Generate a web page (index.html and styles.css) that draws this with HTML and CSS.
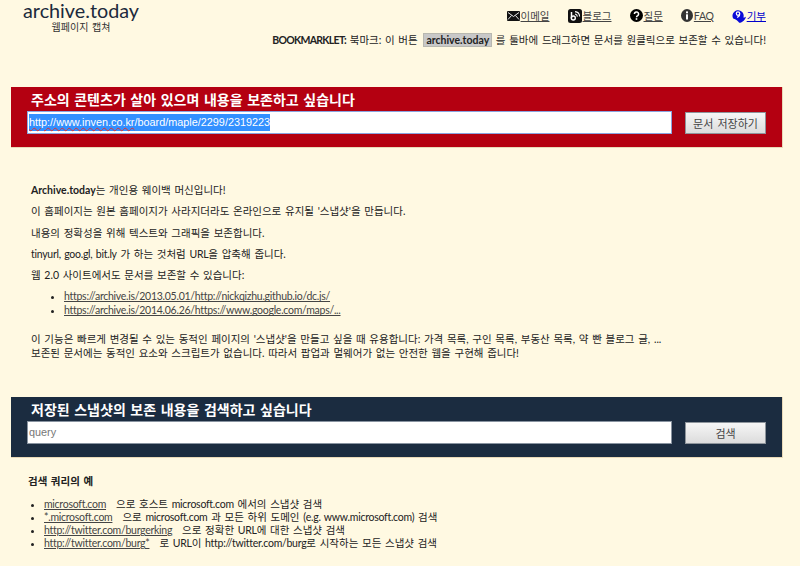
FILE: index.html
```html
<!DOCTYPE html>
<html lang="ko">
<head>
<meta charset="utf-8">
<title>archive.today</title>
<link rel="stylesheet" href="styles.css">
</head>
<body>
<header class="top">
  <div class="brand">
    <div class="logo">archive.today</div>
    <div class="tagline">웹페이지 캡쳐</div>
  </div>
  <div class="topright">
    <nav class="nav">
      <a class="navitem" href="#"><svg width="13" height="10" viewBox="0 0 13 10"><rect width="13" height="10" rx="1" fill="#111"/><path d="M1 1.5 6.5 5.5 12 1.5M1 8.5 4.5 4.5M12 8.5 8.5 4.5" fill="none" stroke="#fff" stroke-width=".9"/></svg><span>이메일</span></a>
      <a class="navitem" href="#"><svg width="14" height="14" viewBox="0 0 14 14"><rect width="14" height="14" rx="2.5" fill="#111"/><path d="M3.5 3v6.2" stroke="#fff" stroke-width="1.5" fill="none"/><circle cx="5.3" cy="9" r="2" fill="none" stroke="#fff" stroke-width="1.4"/><path d="M7 2.6a5 5 0 0 1 4.6 4.8M7 5a2.8 2.8 0 0 1 2.4 2.6" stroke="#fff" stroke-width="1.1" fill="none"/></svg><span>블로그</span></a>
      <a class="navitem" href="#"><svg width="13" height="13" viewBox="0 0 13 13"><circle cx="6.5" cy="6.5" r="6.5" fill="#000"/><path d="M4.4 5a2.1 2 0 1 1 3.3 1.6c-.8.5-1.2.9-1.2 1.6" fill="none" stroke="#fff" stroke-width="1.5"/><rect x="5.7" y="9.2" width="1.6" height="1.6" fill="#fff"/></svg><span>질문</span></a>
      <a class="navitem" href="#"><svg width="12" height="13" viewBox="0 0 12 13"><ellipse cx="6" cy="6.5" rx="6" ry="6.5" fill="#333"/><rect x="5" y="2.4" width="2" height="1.9" fill="#fff"/><rect x="5" y="5.3" width="2" height="5.2" fill="#fff"/></svg><span class="lat">FAQ</span></a>
      <a class="navitem donate" href="#"><svg width="15" height="14" viewBox="0 0 15 14"><path d="M2.2 9.6A5.6 5.6 0 1 1 12.4 8.6C14 8.4 14.6 8 15 7.4 14.6 10.6 11.6 13.4 8.2 13.8 7 12 5 10.6 2.2 9.6Z" fill="#0a0ad8"/><circle cx="7" cy="4.6" r="1.7" fill="none" stroke="#fff" stroke-width="1.2"/><path d="M8.7 4.6c0 2.2-1 3.4-2.6 3.8" fill="none" stroke="#fff" stroke-width="1.2"/></svg><span>기부</span></a>
    </nav>
    <p class="bookmarklet"><b class="tight">BOOKMARKLET:</b> 북마크: 이 버튼 <span class="bm-btn">archive.today</span> 를 툴바에 드래그하면 문서를 원클릭으로 보존할 수 있습니다!</p>
  </div>
</header>

<section class="panel panel-red">
  <h2 class="panel-title">주소의 콘텐츠가 살아 있으며 내용을 보존하고 싶습니다</h2>
  <form class="panel-form">
    <div class="fake-input url"><span class="selected"><span class="spell">http://www.inven.co.kr</span>/board/maple/2299/2319223</span></div>
    <button class="btn" type="button">문서 저장하기</button>
  </form>
</section>

<section class="about">
  <p><b>Archive.today</b>는 개인용 웨이백 머신입니다!</p>
  <p>이 홈페이지는 원본 홈페이지가 사라지더라도 온라인으로 유지될 '스냅샷'을 만듭니다.</p>
  <p>내용의 정확성을 위해 텍스트와 그래픽을 보존합니다.</p>
  <p><span class="lat">tinyurl, goo.gl, bit.ly</span> 가 하는 것처럼 <span class="lat">URL</span>을 압축해 줍니다.</p>
  <p>웹 2.0 사이트에서도 문서를 보존할 수 있습니다:</p>
  <ul class="about-list">
    <li><a href="#">https://archive.is/2013.05.01/http://nickqizhu.github.io/dc.js/</a></li>
    <li><a href="#">https://archive.is/2014.06.26/https://www.google.com/maps/...</a></li>
  </ul>
  <p class="about-last">이 기능은 빠르게 변경될 수 있는 동적인 페이지의 '스냅샷'을 만들고 싶을 때 유용합니다: 가격 목록, 구인 목록, 부동산 목록, 약 빤 블로그 글, ...<br>보존된 문서에는 동적인 요소와 스크립트가 없습니다. 따라서 팝업과 멀웨어가 없는 안전한 웹을 구현해 줍니다!</p>
</section>

<section class="panel panel-navy">
  <h2 class="panel-title">저장된 스냅샷의 보존 내용을 검색하고 싶습니다</h2>
  <form class="panel-form">
    <div class="fake-input query">query</div>
    <button class="btn" type="button">검색</button>
  </form>
</section>

<section class="examples">
  <h3>검색 쿼리의 예</h3>
  <ul>
    <li><a href="#">microsoft.com</a><span class="gap">으로 호스트 <span class="lat">microsoft.com</span> 에서의 스냅샷 검색</span></li>
    <li><a href="#">*.microsoft.com</a><span class="gap">으로 <span class="lat">microsoft.com</span> 과 모든 하위 도메인 <span class="lat">(e.g. www.microsoft.com)</span> 검색</span></li>
    <li><a href="#">http://twitter.com/burgerking</a><span class="gap">으로 정확한 <span class="lat">URL</span>에 대한 스냅샷 검색</span></li>
    <li><a href="#">http://twitter.com/burg*</a><span class="gap">로 <span class="lat">URL</span>이 <span class="lat">http://twitter.com/burg</span>로 시작하는 모든 스냅샷 검색</span></li>
  </ul>
</section>
</body>
</html>
```
FILE: styles.css
```css
* { box-sizing: border-box; }
html, body { height: 100%; }
body {
  margin: 0;
  height: 566px;
  overflow: hidden;
  background: #fff9e2;
  color: #222;
  font-family: Lato, "Noto Sans CJK KR", sans-serif;
  font-size: 10.5px;
  word-spacing: 1px;
}
a { color: #444; }
.lat { letter-spacing: -.27px; }
.about-list a, .examples a { letter-spacing: -.27px; }
.top {
  display: flex;
  justify-content: space-between;
  height: 87px;
  padding-left: 23px;
  padding-right: 34px;
}
.brand { width: 116px; }
.logo { font-size: 19.8px; line-height: 20px; color: #1c2a3c; white-space: nowrap; word-spacing: 0; }
.tagline { text-align: center; font-size: 10px; line-height: 14px; color: #333; }
.topright { display: flex; flex-direction: column; align-items: flex-end; }
.nav { display: flex; gap: 18px; margin-top: 8px; height: 15px; align-items: center; }
.navitem { display: flex; align-items: center; gap: 1px; font-size: 10.5px; line-height: 14px; }
.donate { color: #00c; margin-left: -1px; }
.bookmarklet { margin: 10px 0 0; line-height: 14px; white-space: nowrap; }
.tight { letter-spacing: -.7px; }
.bm-btn {
  display: inline-block;
  background: #c8c8c8;
  border: 1px solid #b8b8b0;
  padding: 0 2px;
  font-weight: 700;
  line-height: 12px;
  margin: 0 0 0 2px;
  color: #222;
}
.panel {
  margin: 0 17px 0 11px;
  height: 61px;
  padding: 4px 16px 0;
  border: 1px solid #e8d9b8;
  border-width: 0 1px 1px 0;
}
.panel-red { background: #b40011; }
.panel-navy { background: #1b2c40; }
.panel-title {
  margin: 0 0 0 4px;
  color: #fff;
  font-size: 14px;
  line-height: 17px;
  font-weight: 700;
  word-spacing: 1.2px;
  white-space: nowrap;
}
.panel-form { display: flex; justify-content: space-between; align-items: center; margin-top: 3px; }
.fake-input {
  width: 645px;
  height: 23px;
  background: #fff;
  border: 1px solid #7f9dd8;
  font-family: "Liberation Sans", sans-serif;
  font-size: 10.85px;
  line-height: 21px;
  padding-left: 1px;
  color: #222;
  white-space: nowrap;
}
.url { border-color: #8aa4e0; }
.query { border-color: #8893a0; color: #777; }
.selected { background: #3390ff; color: #fff; display: inline-block; line-height: 17px; }
.spell { text-decoration: underline wavy #e03030 1px; text-underline-offset: 1px; }
.btn {
  width: 81px;
  height: 22px;
  padding: 0;
  border: 1px solid #8e959c;
  background: linear-gradient(#f6f6f6, #dcdcdc);
  font-family: "Noto Sans CJK KR", sans-serif;
  font-size: 11px;
  word-spacing: 1px;
  color: #444;
}
.about { padding: 35px 0 0 31px; height: 249px; }
.about p { margin: 0 0 7.3px; line-height: 14px; white-space: nowrap; }
.about-list { margin: 0; padding: 0 0 0 33px; line-height: 14px; }
.about p.about-last { margin-top: 15px; line-height: 14px; }
.examples { padding: 16px 0 0 28px; }
.examples h3 { margin: 0 0 10px; font-size: 10.5px; line-height: 14px; font-weight: 700; }
.examples ul { margin: 0; padding: 0 0 0 16px; line-height: 13px; white-space: nowrap; }
.gap { margin-left: 10px; }
```
